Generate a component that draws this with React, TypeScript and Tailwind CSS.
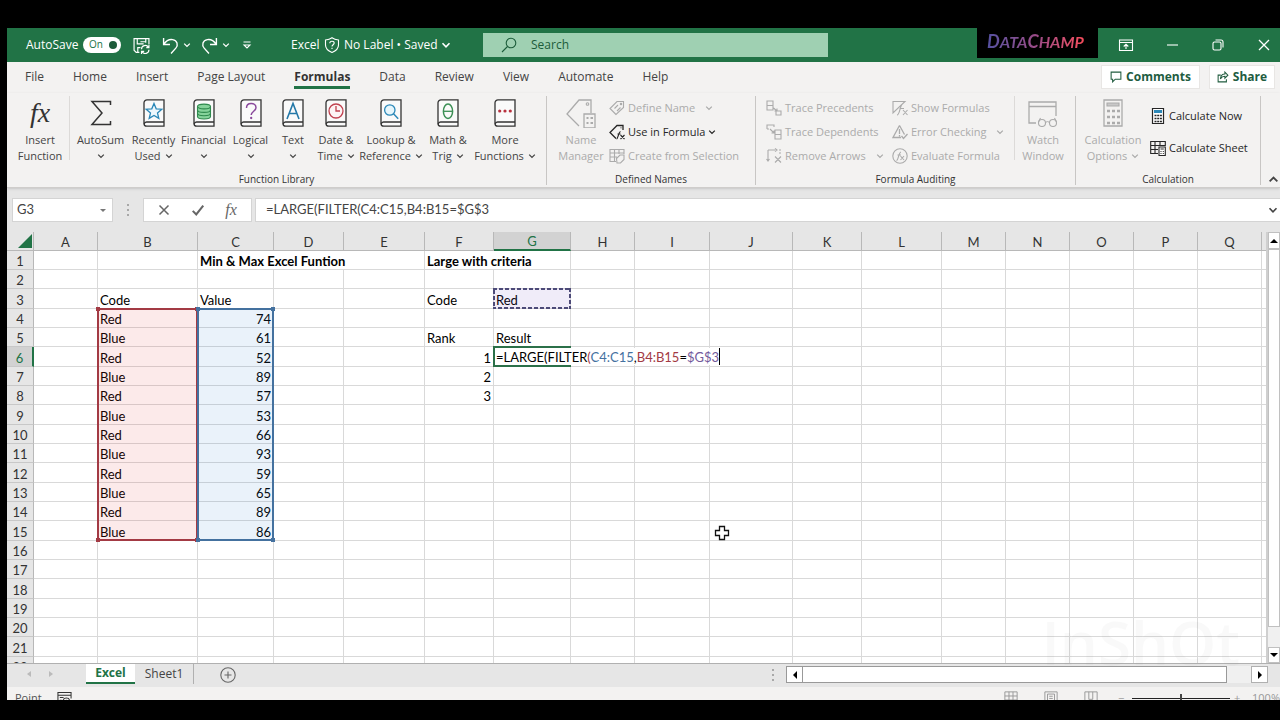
import React, { useState } from 'react';

type IconProps = { children: React.ReactNode; box?: string; className?: string };

// Shared wrapper, every icon is stroked with the current colour
function Icon({ children, box = '0 0 16 16', className = 'w-4 h-4' }: IconProps) {
    return (
        <svg viewBox={box} className={className} fill="none" stroke="currentColor" strokeWidth="1.1" aria-hidden="true">
            {children}
        </svg>
    );
}

function Chevron({ className = 'w-2 h-2' }: { className?: string }) {
    return (
        <svg viewBox="0 0 8 8" className={className} fill="none" stroke="currentColor" strokeWidth="1.3" aria-hidden="true">
            <path d="M1.2 2.6 4 5.4l2.8-2.8" />
        </svg>
    );
}

function Book({ children }: { children: React.ReactNode }) {
    return (
        <Icon box="0 0 22 28" className="w-[22px] h-7">
            <path d="M21 .8H4A3 3 0 0 0 1 3.8v20.700a2.700 2.700 0 0 0 2.700 2.700H21z" fill="#fafafa" stroke="#333" strokeWidth="1.3" />
            <path d="M21 23H3.800A2.500 2.500 0 0 0 1.200 25" stroke="#333" strokeWidth="1.3" />
            {children}
        </Icon>
    );
}

const library = [
    {
        lines: ['AutoSum'],
        width: 'w-[53px]',
        icon: (
            <Icon box="0 0 22 28" className="w-[22px] h-7">
                <path d="M20.500 6V2.500H2L12 14 2 25.500h18.500V22" stroke="#333" strokeWidth="1.5" />
            </Icon>
        ),
    },
    {
        lines: ['Recently', 'Used'],
        width: 'w-[53px]',
        icon: (
            <Book>
                <path d="m11 4.500 2.200 5.300 5.600.400-4.300 3.700 1.300 5.500L11 16.400l-4.800 3 1.300-5.500-4.300-3.700 5.600-.400z" stroke="#2b88b8" strokeWidth="1.300" fill="#eef8fd" />
            </Book>
        ),
    },
    {
        lines: ['Financial'],
        width: 'w-[47px]',
        icon: (
            <Book>
                <g stroke="#2f8a4e" fill="#86d39b">
                    <path d="M4.500 7.500v10c0 1.400 2.900 2.500 6.500 2.500s6.500-1.100 6.500-2.500v-10" />
                    <ellipse cx="11" cy="7.500" rx="6.500" ry="2.400" />
                    <path d="M4.500 11c0 1.400 2.900 2.400 6.500 2.400s6.500-1 6.500-2.400M4.500 14.300c0 1.400 2.900 2.400 6.500 2.400s6.500-1 6.500-2.400" fill="none" />
                </g>
            </Book>
        ),
    },
    {
        lines: ['Logical'],
        width: 'w-[47px]',
        icon: (
            <Book>
                <path d="M6.500 9c0-3 2-4.500 4.700-4.500S16 6.200 16 8.700c0 3.300-4.800 3.800-4.800 7.300" stroke="#8a4a9c" strokeWidth="1.500" />
                <circle cx="11.200" cy="19" r=".6" fill="#8a4a9c" stroke="#8a4a9c" />
            </Book>
        ),
    },
    {
        lines: ['Text'],
        width: 'w-[38px]',
        icon: (
            <Book>
                <path d="m5 20 6-15.500L17 20M7.200 14.500h7.600" stroke="#2478a8" strokeWidth="1.600" />
            </Book>
        ),
    },
    {
        lines: ['Date &', 'Time'],
        width: 'w-12',
        icon: (
            <Book>
                <circle cx="11" cy="12" r="7" stroke="#c0414f" strokeWidth="1.300" fill="#fdf3f4" />
                <path d="M11 7v5h4" stroke="#c0414f" strokeWidth="1.300" />
            </Book>
        ),
    },
    {
        lines: ['Lookup &', 'Reference'],
        width: 'w-[62px]',
        icon: (
            <Book>
                <circle cx="9.800" cy="11" r="5.200" stroke="#2b88b8" strokeWidth="1.300" fill="#e6f6fc" />
                <path d="m13.500 14.800 4.700 4.900" stroke="#2b88b8" strokeWidth="1.500" />
            </Book>
        ),
    },
    {
        lines: ['Math &', 'Trig'],
        width: 'w-[52px]',
        icon: (
            <Book>
                <ellipse cx="11" cy="12.300" rx="4.600" ry="7.300" stroke="#3c8f55" strokeWidth="1.500" />
                <path d="M6.400 12.300h9.200" stroke="#3c8f55" strokeWidth="1.300" />
            </Book>
        ),
    },
    {
        lines: ['More', 'Functions'],
        width: 'w-[62px]',
        icon: (
            <Book>
                <g fill="#b8323f" stroke="none">
                    <circle cx="5.700" cy="12" r="1.600" />
                    <circle cx="11" cy="12" r="1.600" />
                    <circle cx="16.300" cy="12" r="1.600" />
                </g>
            </Book>
        ),
    },
];

const tabs = ['File', 'Home', 'Insert', 'Page Layout', 'Formulas', 'Data', 'Review', 'View', 'Automate', 'Help'];

const columns = [
    { name: 'A', width: 'w-16' },
    { name: 'B', width: 'w-[100px]' },
    { name: 'C', width: 'w-[76px]' },
    { name: 'D', width: 'w-[70px]' },
    { name: 'E', width: 'w-[81px]' },
    { name: 'F', width: 'w-[69px]' },
    { name: 'G', width: 'w-[77px]' },
    { name: 'H', width: 'w-16' },
    { name: 'I', width: 'w-[75px]' },
    { name: 'J', width: 'w-[83px]' },
    { name: 'K', width: 'w-[69px]' },
    { name: 'L', width: 'w-20' },
    { name: 'M', width: 'w-16' },
    { name: 'N', width: 'w-16' },
    { name: 'O', width: 'w-16' },
    { name: 'P', width: 'w-16' },
    { name: 'Q', width: 'w-16' },
];

const values = [74, 61, 52, 89, 57, 53, 66, 93, 59, 65, 89, 86];

const cells: Record<string, string | number> = {
    C1: 'Min & Max Excel Funtion',
    F1: 'Large with criteria',
    B3: 'Code',
    C3: 'Value',
    F3: 'Code',
    G3: 'Red',
    F5: 'Rank',
    G5: 'Result',
    F6: 1,
    F7: 2,
    F8: 3,
};
values.forEach((v, i) => {
    cells[`B${i + 4}`] = i % 2 === 0 ? 'Red' : 'Blue';
    cells[`C${i + 4}`] = v;
});

const spans: Record<string, number> = { C1: 3, F1: 2 };
const covered = ['D1', 'E1', 'G1'];

function Range({ tone }: { tone: 'red' | 'blue' }) {
    const frame = tone === 'red' ? 'border-[#a33a44] bg-[#e03030]/10' : 'border-[#44719f] bg-[#3080d0]/10';
    const dot = tone === 'red' ? 'bg-[#a33a44]' : 'bg-[#44719f]';
    return (
        <span className={`absolute -top-px -left-px -right-px h-[233px] border-2 ${frame} z-10 pointer-events-none`}>
            <i className={`absolute -top-[3px] -left-[3px] size-1 ${dot}`} />
            <i className={`absolute -top-[3px] -right-[3px] size-1 ${dot}`} />
            <i className={`absolute -bottom-[3px] -left-[3px] size-1 ${dot}`} />
            <i className={`absolute -bottom-[3px] -right-[3px] size-1 ${dot}`} />
        </span>
    );
}

function Cell({ id }: { id: string }) {
    const value = cells[id];
    const align = typeof value === 'number' ? 'text-right' : 'text-left';
    const bold = id === 'C1' || id === 'F1' ? 'font-bold' : '';
    return (
        <td colSpan={spans[id]} className={`relative p-0 pt-[2px] px-[2px] border-r border-b border-[#d9d9d9] whitespace-nowrap ${align} ${bold}`}>
            {value}
            {id === 'B4' && <Range tone="red" />}
            {id === 'C4' && <Range tone="blue" />}
            {id === 'G3' && (
                <span className="absolute -inset-px bg-[#7040c0]/10">
                    <svg className="block w-full h-full" aria-hidden="true">
                        <rect width="100%" height="100%" fill="none" stroke="#4c4a78" strokeWidth="4" strokeDasharray="4 2" />
                    </svg>
                </span>
            )}
            {id === 'G6' && (
                <span className="absolute -top-px -left-px h-[21px] z-10 flex">
                    <span className="absolute inset-y-0 left-0 w-[78px] border-2 border-r-0 border-[#2b7049]" />
                    <span className="relative bg-white pl-px pt-px my-[2px] ml-[2px] border-r border-black">
                        =LARGE(FILTER<span className="text-[#a33a44]">(</span>
                        <span className="text-[#44719f]">C4:C15</span>,<span className="text-[#a33a44]">B4:B15</span>=
                        <span className="text-[#735a9c]">$G$3</span>
                    </span>
                </span>
            )}
        </td>
    );
}

function BigButton({ icon, lines, width, arrow = true, disabled = false }: {
    icon: React.ReactNode; lines: string[]; width: string; arrow?: boolean; disabled?: boolean;
}) {
    const last = lines.length - 1;
    return (
        <button type="button" disabled={disabled} className={`${width} shrink-0 flex flex-col items-center disabled:text-[#ababab]`}>
            <span className="h-9 pb-[2px] flex items-center">{icon}</span>
            {lines.map((line, i) => (
                <span key={line} className="h-4 leading-4 flex items-center gap-1 whitespace-nowrap">
                    {line}
                    {arrow && i === last && lines.length > 1 && <Chevron />}
                </span>
            ))}
            {arrow && lines.length === 1 && <span className="h-4 flex items-center"><Chevron /></span>}
        </button>
    );
}

function SmallButton({ icon, label, arrow = false, disabled = false }: {
    icon: React.ReactNode; label: string; arrow?: boolean; disabled?: boolean;
}) {
    return (
        <button type="button" disabled={disabled} className="h-6 flex items-center gap-[3px] whitespace-nowrap text-[#262626] disabled:text-[#ababab]">
            {icon}
            {label}
            {arrow && <Chevron className={disabled ? 'w-2 h-2 ml-[7px]' : 'w-2 h-2'} />}
        </button>
    );
}

function Group({ title, children }: { title: string; children: React.ReactNode }) {
    return (
        <section className="flex flex-col shrink-0 border-r border-[#c8c6c4]">
            <div className="flex h-[77px] shrink-0">{children}</div>
            <h2 className="text-[10px] leading-3 text-center text-[#333]">{title}</h2>
        </section>
    );
}

function TitleBar() {
    const [autoSave, setAutoSave] = useState(true);
    return (
        <header className="relative h-[34px] shrink-0 bg-[#217346] text-white text-xs flex items-center">
            <div className="w-[276px] shrink-0 pl-[19px] flex items-center">
                <label htmlFor="autosave" className="w-[57px]">AutoSave</label>
                <span className="relative h-4 w-[38px] rounded-full bg-white text-[#217346] flex items-center">
                    <input id="autosave" type="checkbox" checked={autoSave} onChange={(e) => setAutoSave(e.target.checked)} className="absolute inset-0 opacity-0" />
                    <span className="pl-[6px] text-[10px]">{autoSave ? 'On' : 'Off'}</span>
                    <span className="ml-auto mr-1 size-2 rounded-full bg-[#1c5c3a]" />
                </span>
                <button type="button" aria-label="Save" className="ml-3">
                    <Icon className="w-[17px] h-[17px]">
                        <path d="M6 14.500H3L1 12.500v-11h14V7M4 1.500v5h6M12 1.500v4M4.500 14.500V10H7M12 4.500H7" />
                        <path d="M8 11.500a3.500 3.500 0 0 1 6.500-1.800M15 7.500V10h-2.500M15 12a3.500 3.500 0 0 1-6.500 1.800M8 16v-2.500h2.500" />
                    </Icon>
                </button>
                <button type="button" aria-label="Undo" className="ml-3 flex items-center gap-1">
                    <Icon className="w-[17px] h-[17px]">
                        <path d="M1.500 1v6h6M1.800 6.700C4 3.500 7 2 10 2.500c4.500.8 5.500 5 3 8L8.500 15.500" strokeWidth="1.300" />
                    </Icon>
                    <Chevron />
                </button>
                <button type="button" aria-label="Redo" className="ml-[10px] flex items-center gap-1">
                    <Icon className="w-[17px] h-[17px]">
                        <path d="M14.500 1v6h-6M14.200 6.700C12 3.500 9 2 6 2.500c-4.500.8-5.500 5-3 8l4.500 5" strokeWidth="1.300" />
                    </Icon>
                    <Chevron />
                </button>
                <button type="button" aria-label="Customize Quick Access Toolbar" className="ml-3">
                    <Icon box="0 0 10 10" className="w-[10px] h-[10px]"><path d="M1.500 2h7M2 5h6L5 8z" /></Icon>
                </button>
            </div>
            <div className="w-[200px] shrink-0 pl-2 flex items-center whitespace-nowrap">
                <span className="w-[33px]">Excel</span>
                <Icon className="w-4 h-4 mr-1">
                    <path d="M8 .8C6 2.300 4 2.800 1.500 3v5c0 3.500 3 6 6.500 7.400 3.500-1.400 6.500-3.900 6.500-7.400V3C12 2.800 10 2.300 8 .8z" />
                    <path d="M5.800 6.200c0-1.400 1-2 2.200-2s2.200.7 2.200 1.900C10.200 7.700 8 7.800 8 9.500M8 10.800v1.200" />
                </Icon>
                <button type="button" className="flex items-center gap-1">No Label • Saved <Chevron className="w-[10px] h-[10px]" /></button>
            </div>
            <div className="w-[345px] h-6 bg-[#9fd0b2] text-[#1c5c3a] flex items-center pl-[18px] gap-[14px]">
                <Icon className="w-4 h-4">
                    <circle cx="10" cy="6" r="4.800" />
                    <path d="m6.500 9.500-5.500 5.500" />
                </Icon>
                <input type="search" aria-label="Search" placeholder="Search" className="flex-1 bg-transparent outline-none placeholder:text-[#1c5c3a]" />
            </div>
            <div className="ml-auto mr-2 flex items-center gap-[30px]">
                <button type="button" aria-label="Ribbon Display Options">
                    <Icon><path d="M1.500 3h13v10.500h-13zM1.500 5.500h13M8 12V7.500M5.700 9.500 8 7.300l2.300 2.200" /></Icon>
                </button>
                <button type="button" aria-label="Minimize"><Icon><path d="M3 8h11" /></Icon></button>
                <button type="button" aria-label="Restore Down">
                    <Icon><rect x="3" y="5" width="8" height="8" rx="1.500" /><path d="M5.500 3h5.500a2 2 0 0 1 2 2v5.500" /></Icon>
                </button>
                <button type="button" aria-label="Close"><Icon><path d="m3 3 10 10M13 3 3 13" strokeWidth="1.300" /></Icon></button>
            </div>
            <div className="absolute right-[182px] top-0 h-[30px] w-[121px] bg-black flex items-center justify-center">
                <span className="pb-1 pr-1 font-['Lato'] italic font-bold text-lg leading-5 bg-linear-to-r from-[#5450a0] via-[#9c4a86] to-[#ff4a55] bg-clip-text text-transparent">
                    D<span className="text-base leading-5">ATA</span>C<span className="text-base leading-5">HAMP</span>
                </span>
            </div>
        </header>
    );
}

function TabRow() {
    const [active, setActive] = useState('Formulas');
    return (
        <nav className="h-[31px] shrink-0 flex items-start pl-[18px] text-xs text-[#444]">
            {tabs.map((tab) => (
                <button
                    key={tab}
                    type="button"
                    onClick={() => setActive(tab)}
                    className={`mr-[29px] h-[27px] pt-[6px] whitespace-nowrap border-b-[3px] ${tab === active ? 'font-bold text-[#333] border-[#217346]' : 'border-transparent'}`}
                >
                    {tab}
                </button>
            ))}
            <div className="ml-auto mr-[5px] mt-[3px] flex gap-[9px] font-bold text-[#215c3f]">
                <button type="button" className="h-6 w-[99px] bg-white border border-[#e8e6e4] flex items-center justify-center gap-1">
                    <Icon className="w-3 h-3"><path d="M1.500 1.500h13v9.500H7L3.500 14.500V11h-2z" strokeWidth="1.400" /></Icon>
                    Comments
                </button>
                <button type="button" className="h-6 w-[66px] bg-white border border-[#e8e6e4] flex items-center justify-center gap-1">
                    <Icon className="w-3 h-3">
                        <path d="M5 5.500H1.500v9h11V11M10.500 1.500l4 4-4 4V7C8 7 6 8 4.500 10.500c.5-4 3-6.500 6-6.500z" strokeWidth="1.400" />
                    </Icon>
                    Share
                </button>
            </div>
        </nav>
    );
}

function Ribbon() {
    return (
        <div className="h-[95px] shrink-0 pt-[3px] pb-[2px] flex text-[11px] text-[#444] border-b border-[#cfcdcb] shadow">
            <Group title="Function Library">
                <BigButton
                    width="ml-[5px] w-14"
                    lines={['Insert', 'Function']}
                    arrow={false}
                    icon={<span className="font-['Liberation_Serif'] italic text-[28px] leading-7 text-[#333]">fx</span>}
                />
                <div className="w-px h-16 ml-px mr-1 bg-[#dcdad8]" />
                {library.map((item) => <BigButton key={item.lines[0]} {...item} />)}
                <div className="w-[10px]" />
            </Group>
            <Group title="Defined Names">
                <BigButton
                    width="w-[62px] pl-[6px]"
                    lines={['Name', 'Manager']}
                    arrow={false}
                    disabled
                    icon={
                        <Icon box="0 0 30 30" className="w-[30px] h-[30px]">
                            <path d="M13 28 1 16 13 2h12v13" strokeWidth="1.300" />
                            <circle cx="21.500" cy="6" r="1.300" />
                            <path d="M18 16h11v14H18z" fill="#f3f2f1" strokeWidth="1.300" />
                            <path d="M20.500 20h2M24.500 20h2.500M20.500 25h2M24.500 25h2.500" strokeWidth="2" />
                        </Icon>
                    }
                />
                <div className="w-[146px]">
                    <SmallButton
                        disabled
                        arrow
                        label="Define Name"
                        icon={<Icon><path d="M7 14.500 1 8.500 8 1.500h6.500v6z" /><path d="M5.500 8.500 9 5M8 11l3.500-3.500" /><circle cx="12" cy="4" r=".7" /></Icon>}
                    />
                    <SmallButton
                        arrow
                        label="Use in Formula"
                        icon={
                            <Icon>
                                <path d="M7 14.500 1 8.500 8 1.500h6V6M12 3.500v.8" strokeWidth="1.300" />
                                <path d="M7.500 15c1.500 0 2-7 4-7.500M8.500 10h3M11.500 11l4 4M15.500 11l-4 4" />
                            </Icon>
                        }
                    />
                    <SmallButton
                        disabled
                        label="Create from Selection"
                        icon={<Icon><path d="M7 13.500H1v-12h14V6M1 5h14M1 9h7M5.500 1.500v12M10 1.500V6M8 15l-.5-4.500L11 7h4v4.500L11.500 15z" /></Icon>}
                    />
                </div>
            </Group>
            <Group title="Formula Auditing">
                <div className="w-[127px] pl-[10px]">
                    <SmallButton disabled label="Trace Precedents" icon={<Icon><path d="M1 1h6v9H1zM1 5.500h6M10 15h5v-4h-5zM7.500 8l3.500 3M11 8.500V11H8.500" /></Icon>} />
                    <SmallButton disabled label="Trace Dependents" icon={<Icon><path d="M9 6h6v9H9zM9 10.500h6M1 5V1h7v2M1 5h2M4 5l4 4M8 6.500V9H5.500" /></Icon>} />
                    <SmallButton disabled arrow label="Remove Arrows" icon={<Icon><path d="M2 2h7M2 2v11M.5 11 2 13l1.500-2M9 .5 11 2 9 3.500M9 8.500l6 6M15 8.500l-6 6M13 2h2M13 5h2" /></Icon>} />
                </div>
                <div className="w-[131px] pl-[9px]">
                    <SmallButton disabled label="Show Formulas" icon={<Icon><path d="M1 1.500h12L1 13zM5 15c3 0 3-11 6-11.500M7.500 8.500H12M11 10l4.500 5M15.500 10 11 15" /></Icon>} />
                    <SmallButton disabled arrow label="Error Checking" icon={<Icon><path d="M7.500 1.500 1 13.500h8M7.500 1.500l5 9M7.500 5v5M7.500 11v1.500M9.500 12l2 2.500 4-4.500" strokeWidth="1.300" /></Icon>} />
                    <SmallButton disabled label="Evaluate Formula" icon={<Icon><circle cx="8" cy="8" r="7.200" /><path d="M4.500 12.500c2 0 2-8 4.500-8.500M5.500 7H9M8.500 8l3.500 4M12 8l-3.500 4" /></Icon>} />
                </div>
                <div className="w-px h-16 bg-[#dcdad8]" />
                <BigButton
                    width="w-[60px] pr-1"
                    lines={['Watch', 'Window']}
                    arrow={false}
                    disabled
                    icon={
                        <Icon box="0 0 30 28" className="w-[30px] h-7">
                            <path d="M8 24H1V3h27v14M1 7.500h27" strokeWidth="1.300" />
                            <circle cx="14" cy="24" r="3.500" />
                            <circle cx="25" cy="24" r="3.500" />
                            <path d="M17.500 23.500c1-1 3-1 4 0M10.500 23l2-4M28.500 23l-2-4" />
                        </Icon>
                    }
                />
            </Group>
            <Group title="Calculation">
                <BigButton
                    width="w-[74px]"
                    lines={['Calculation', 'Options']}
                    disabled
                    icon={
                        <Icon box="0 0 20 28" className="w-5 h-7">
                            <path d="M1 1h18v26H1z" strokeWidth="1.300" />
                            <path d="M4 4h12v3H4z" fill="#c8c8c8" />
                            <path d="M4 12h3m2 0h3m2 0h3M4 18h3m2 0h3m2 0h3M4 24h3m2 0h3m2 0h3" strokeWidth="2.400" />
                        </Icon>
                    }
                />
                <div className="w-[110px] pt-2 flex flex-col gap-2 items-start">
                    <SmallButton
                        label="Calculate Now"
                        icon={
                            <Icon>
                                <path d="M2.500.5h11v15h-11z" strokeWidth="1.200" fill="#fff" />
                                <path d="M4.500 2.500h7v2h-7z" fill="#2b88b8" stroke="#2b88b8" />
                                <path d="M4.500 7.500h2m.7 0h2m.7 0h2m-7.400 3h2m.7 0h2m.7 0h2m-7.400 3h2m.7 0h2m.7 0h2" strokeWidth="1.500" />
                            </Icon>
                        }
                    />
                    <SmallButton
                        label="Calculate Sheet"
                        icon={
                            <Icon>
                                <path d="M8 13.500H.7v-12h14.600V6M.7 5.500h14.600M.7 9.500H8M5 1.500v12M10 1.500V6" />
                                <path d="M9 7h6.300v8.500H9z" fill="#fff" />
                                <path d="M10.500 9h3.300M10.500 11.500h1m1.300 0h1m-3.300 2h1m1.300 0h1" />
                            </Icon>
                        }
                    />
                </div>
            </Group>
            <button type="button" aria-label="Collapse the Ribbon" className="ml-auto mr-px mt-auto">
                <Chevron className="w-[11px] h-[11px] rotate-180" />
            </button>
        </div>
    );
}

function FormulaBar() {
    const [formula, setFormula] = useState('=LARGE(FILTER(C4:C15,B4:B15=$G$3');
    return (
        <div className="h-[34px] shrink-0 pt-[10px] flex items-stretch text-[#444] font-['Lato'] text-[13px]">
            <div className="ml-[5px] w-[101px] bg-white border border-[#d4d4d4] flex items-center">
                <input aria-label="Name Box" defaultValue="G3" className="w-20 flex-1 pl-1 outline-none" />
                <span className="mr-[6px] border-x-[3px] border-t-[3px] border-x-transparent border-t-[#777]" />
            </div>
            <div className="w-[30px] flex flex-col items-center justify-center gap-[3px]">
                <i className="size-[2px] bg-[#a8a8a8]" />
                <i className="size-[2px] bg-[#a8a8a8]" />
                <i className="size-[2px] bg-[#a8a8a8]" />
            </div>
            <div className="w-[109px] bg-white border border-[#d4d4d4] flex items-center justify-around px-1 text-[#666]">
                <button type="button" aria-label="Cancel"><Icon className="w-3 h-3"><path d="m2 2 12 12M14 2 2 14" strokeWidth="2" /></Icon></button>
                <button type="button" aria-label="Enter"><Icon className="w-[14px] h-[14px]"><path d="m2 9 4 4 8-10" strokeWidth="2.400" /></Icon></button>
                <button type="button" aria-label="Insert Function" className="font-['Liberation_Serif'] italic text-base leading-5">fx</button>
            </div>
            <div className="ml-[3px] flex-1 bg-white border border-r-0 border-[#d4d4d4] flex items-center">
                <input aria-label="Formula Bar" value={formula} onChange={(e) => setFormula(e.target.value)} className="flex-1 pl-[10px] outline-none" />
                <Chevron className="w-[10px] h-[10px] mr-[2px]" />
            </div>
        </div>
    );
}

function Sheet() {
    const rows = Array.from({ length: 22 }, (_, i) => i + 1);
    return (
        <div className="flex-1 min-h-0 pt-[10px] flex">
            <div className="flex-1 min-w-0 overflow-hidden">
                <table className="w-full table-fixed border-separate border-spacing-0 bg-white font-['Lato'] text-[13px] leading-4 text-black">
                    <colgroup>
                        <col className="w-[27px]" />
                        {columns.map((c) => <col key={c.name} className={c.width} />)}
                        <col />
                    </colgroup>
                    <thead>
                        <tr className="h-[19px] bg-[#e6e6e6] text-[#333]">
                            <th className="p-0 border-r border-b border-[#b8b8b8]">
                                <svg viewBox="0 0 14 14" className="w-[14px] h-[14px] ml-auto mr-[1px]" aria-hidden="true"><path d="M14 0v14H0z" fill="#217346" /></svg>
                            </th>
                            {columns.map((c) => (
                                <th
                                    key={c.name}
                                    scope="col"
                                    className={`p-0 font-normal border-r ${c.name === 'G' ? 'pt-px bg-[#d2d2d2] text-[#217346] border-b-2 border-r-[#b8b8b8] border-b-[#217346]' : 'pt-[2px] border-b border-[#b8b8b8]'}`}
                                >
                                    {c.name}
                                </th>
                            ))}
                            <td className="p-0 border-b border-[#b8b8b8]" />
                        </tr>
                    </thead>
                    <tbody>
                        {rows.map((r) => (
                            <tr key={r} className={r % 3 === 0 ? 'h-5' : 'h-[19px]'}>
                                <th
                                    scope="row"
                                    className={`p-0 pt-[2px] font-normal border-b border-b-[#c8c8c8] ${r === 6 ? 'bg-[#d2d2d2] text-[#217346] border-r-2 border-r-[#217346]' : 'bg-[#e6e6e6] text-[#333] border-r border-r-[#b8b8b8]'}`}
                                >
                                    {r}
                                </th>
                                {columns.filter((c) => !covered.includes(c.name + r)).map((c) => <Cell key={c.name} id={c.name + r} />)}
                                <td className="p-0 border-b border-[#d9d9d9]" />
                            </tr>
                        ))}
                    </tbody>
                </table>
            </div>
            <div className="w-[14px] shrink-0 flex flex-col bg-[#f0f0f0] border-l-2 border-[#cfcfcf]">
                <button type="button" aria-label="Scroll up" className="h-[17px] bg-white border border-[#c0c0c0] flex items-center justify-center">
                    <i className="border-x-4 border-b-4 border-x-transparent border-b-black" />
                </button>
                <div className="flex-1 bg-white border border-[#c0c0c0]" />
                <div className="h-5" />
                <button type="button" aria-label="Scroll down" className="h-4 bg-white border border-[#c0c0c0] flex items-center justify-center">
                    <i className="border-x-4 border-t-4 border-x-transparent border-t-black" />
                </button>
            </div>
        </div>
    );
}

function SheetTabs() {
    return (
        <div className="h-6 shrink-0 flex items-start border-t border-[#b0b0b0] text-[13px] text-[#444]">
            <div className="w-[79px] h-5 flex items-center gap-[18px] pl-5">
                <i className="border-y-[3px] border-r-4 border-y-transparent border-r-[#bbb]" />
                <i className="border-y-[3px] border-l-4 border-y-transparent border-l-[#bbb]" />
            </div>
            <button type="button" className="w-[49px] h-5 bg-white border-b-2 border-[#217346] text-[#217346] text-xs font-bold leading-[18px]">Excel</button>
            <button type="button" className="w-[59px] h-5 border-r border-[#b0b0b0] text-xs leading-[18px]">Sheet1</button>
            <button type="button" aria-label="New sheet" className="ml-[26px] mt-[3px] text-[#666]">
                <Icon><circle cx="8" cy="8" r="7.200" /><path d="M8 4.500v7M4.500 8h7" /></Icon>
            </button>
            <div className="ml-auto flex pt-[2px]">
                <div className="w-[13px] mr-px flex flex-col items-start justify-center gap-[3px]">
                    <i className="size-[2px] bg-[#a8a8a8]" />
                    <i className="size-[2px] bg-[#a8a8a8]" />
                    <i className="size-[2px] bg-[#a8a8a8]" />
                </div>
                <button type="button" aria-label="Scroll left" className="size-[17px] bg-white border border-[#999] flex items-center justify-center">
                    <i className="border-y-4 border-r-4 border-y-transparent border-r-black" />
                </button>
                <div className="w-[424px] h-[17px] bg-white border border-l-0 border-[#999]" />
                <div className="w-6 bg-[#f0f0f0]" />
                <button type="button" aria-label="Scroll right" className="size-[17px] mr-3 bg-white border border-[#b0b0b0] flex items-center justify-center">
                    <i className="border-y-4 border-l-4 border-y-transparent border-l-black" />
                </button>
            </div>
        </div>
    );
}

function StatusBar() {
    const [zoom, setZoom] = useState(100);
    return (
        <footer className="h-[13px] shrink-0 overflow-hidden bg-[#f3f2f1] text-[11px] text-[#555]">
            <div className="h-[22px] pl-2 flex items-center whitespace-nowrap">
                <span className="w-[42px]">Point</span>
                <Icon className="w-[15px] h-[15px] text-[#333]"><path d="M5 14.500H1v-13h14V8M1 4.500h14M3 7h4M3 10h2" /><circle cx="10" cy="11" r="3.500" /><circle cx="10" cy="11" r="1" /></Icon>
                <div className="ml-auto flex items-center text-[#999]">
                    <Icon className="w-[14px] h-[14px] mr-[26px]"><path d="M1 1h14v14H1zM1 5.700h14M1 10.300h14M5.700 1v14M10.300 1v14" /></Icon>
                    <Icon className="w-[14px] h-[14px] mr-[26px]"><path d="M1 1h14v14H1zM4 3.500h8v11H4zM6 6h4M6 8.500h4M6 11h4" /></Icon>
                    <Icon className="w-[14px] h-[14px] mr-5"><path d="M1 1h14v14H1zM5.500 1v8.500H10V1" /></Icon>
                    <span className="w-[14px]">−</span>
                    <input
                        type="range"
                        aria-label="Zoom"
                        min={0}
                        max={200}
                        value={zoom}
                        onChange={(e) => setZoom(Number(e.target.value))}
                        className="appearance-none w-[98px] h-px bg-[#222] [&::-webkit-slider-thumb]:appearance-none [&::-webkit-slider-thumb]:w-[2px] [&::-webkit-slider-thumb]:h-2 [&::-webkit-slider-thumb]:bg-[#444]"
                    />
                    <span className="w-[22px] pl-1">+</span>
                    <span>{zoom}%</span>
                </div>
            </div>
        </footer>
    );
}

export default function App() {
    return (
        <div className="h-screen bg-black pt-7 pb-5 pl-[7px] font-['Open_Sans',sans-serif]">
            <main className="relative h-full flex flex-col overflow-hidden bg-[#e6e6e6]">
                <TitleBar />
                <div className="shrink-0 bg-[#f3f2f1]">
                    <TabRow />
                    <Ribbon />
                </div>
                <FormulaBar />
                <Sheet />
                <SheetTabs />
                <StatusBar />
                <svg viewBox="0 0 22 22" className="absolute left-[704px] top-[494px] w-[22px] h-[22px]" aria-hidden="true">
                    <path d="M8.500 4.500h5v4h4v5h-4v4h-5v-4h-4v-5h4z" fill="#fff" stroke="#111" strokeWidth="1.300" />
                </svg>
                <span className="absolute right-10 bottom-7 text-6xl leading-none font-semibold text-[#888]/5 pointer-events-none">InShOt</span>
            </main>
        </div>
    );
}
